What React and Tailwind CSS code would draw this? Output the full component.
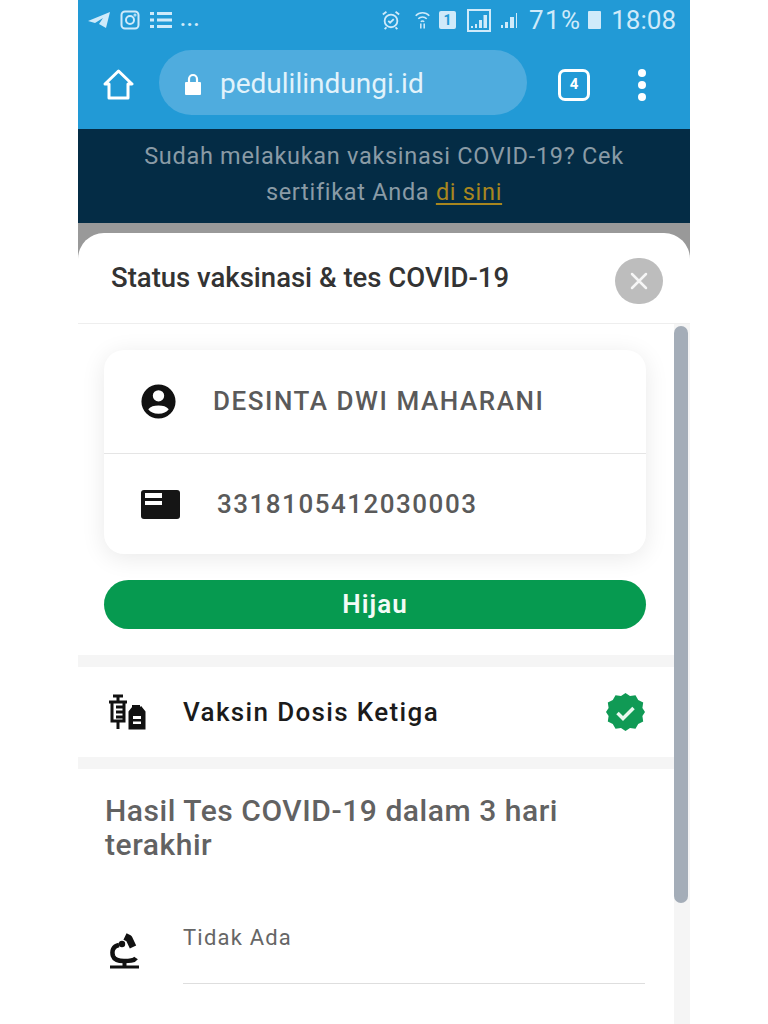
export default function App() {
  return (
    <div className="h-[1024px] w-[768px] overflow-hidden bg-white font-['Roboto',sans-serif]">
      <div className="ml-[78px] flex h-full w-[612px] flex-col">
        <header className="h-[129px] shrink-0 bg-[#229ad6] text-[#cfeafa]">
          <div className="flex h-[40px] items-center pl-[10px] pr-[14px]">
            <svg width="22" height="18" viewBox="0 0 22 18" fill="currentColor"><path d="M0 10 L22 1 L18 17 L11 13 L15 7 L7 12 Z" /></svg>
            <svg className="ml-[10px]" width="20" height="20" viewBox="0 0 20 20" fill="none" stroke="currentColor" strokeWidth="2"><rect x="1.500" y="1.500" width="17" height="17" rx="3.500" /><circle cx="10" cy="10" r="4" /><circle cx="15" cy="5" r="0.5" /></svg>
            <svg className="ml-[10px]" width="22" height="18" viewBox="0 0 22 18" fill="currentColor"><rect x="0" y="1" width="4" height="3" /><rect x="7" y="1" width="15" height="3" /><rect x="0" y="7.500" width="4" height="3" /><rect x="7" y="7.500" width="15" height="3" /><rect x="0" y="14" width="4" height="3" /><rect x="7" y="14" width="15" height="3" /></svg>
            <span className="ml-[8px] mt-[-3px] text-[20px] font-bold leading-none tracking-[1px]">...</span>
            <svg className="ml-auto" width="20" height="22" viewBox="0 0 22 24" fill="none" stroke="currentColor" strokeWidth="2"><circle cx="11" cy="13" r="7" /><path d="M8 13l2 2 4-4M2 6l4-3M20 6l-4-3M6 20l-2 2M16 20l2 2" /></svg>
            <svg className="ml-[13px]" width="17" height="22" viewBox="0 0 20 24" fill="none" stroke="currentColor" strokeWidth="1.800"><path d="M2 7a11 11 0 0 1 16 0M5 10.500a7 7 0 0 1 10 0M8 14a3 3 0 0 1 4 0" /><path d="M8 16v6M12 16v6" /></svg>
            <div className="ml-[8px] flex h-[18px] w-[17px] items-center justify-center rounded-[2px] bg-[#cfeafa] text-[14px] font-bold leading-none text-[#229ad6]">1</div>
            <div className="ml-[11px] flex h-[23px] w-[24px] items-end justify-center border-2 border-[#cfeafa] pb-[1px]">
              <svg width="18" height="16" viewBox="0 0 18 16" fill="currentColor"><path d="M1 15h2v-2H1zM5 15h2v-4H5zM9 15h3V7H9zM13.500 15H17V2h-3.500z" /></svg>
            </div>
            <svg className="ml-[9px]" width="19" height="18" viewBox="0 0 19 18" fill="currentColor"><path d="M1 17h2v-3H1zM5 17h3v-6H5zM10 17h4V6h-4zM16 17h1V2h-1z" /></svg>
            <span className="ml-[10px] text-[26px] leading-none tracking-[1.3px]">71%</span>
            <div className="ml-[7px] h-[18px] w-[13px] rounded-[1px] bg-[#cfeafa]" />
            <span className="ml-[10px] text-[26px] leading-none">18:08</span>
          </div>
          <div className="flex h-[89px] items-center">
            <svg className="ml-[25px]" width="31" height="31" viewBox="0 0 31 31" fill="none" stroke="white" strokeWidth="3" strokeLinejoin="round"><path d="M2 15 L15.500 2 L29 15 H25 V29 H6 V15 Z" /></svg>
            <div className="ml-[25px] mt-[-4px] flex h-[65px] w-[368px] items-center rounded-full bg-[#4facde] pl-[24px] pt-[3px] text-white">
              <svg width="20" height="24" viewBox="0 0 20 24" fill="white"><path d="M3 10h14a1 1 0 0 1 1 1v11a1 1 0 0 1-1 1H3a1 1 0 0 1-1-1V11a1 1 0 0 1 1-1Z" /><path d="M6 11V7a4 4 0 0 1 8 0v4" fill="none" stroke="white" strokeWidth="2.200" /></svg>
              <span className="ml-[17px] text-[28px] leading-none text-[#e2f3fb]">pedulilindungi.id</span>
            </div>
            <div className="ml-[31px] flex h-[32px] w-[32px] items-center justify-center rounded-[7px] border-[3px] border-white text-[15px] font-bold leading-none text-white">4</div>
            <div className="ml-[48px] flex flex-col gap-[4px]">
              <div className="h-[8px] w-[8px] rounded-full bg-white" />
              <div className="h-[8px] w-[8px] rounded-full bg-white" />
              <div className="h-[8px] w-[8px] rounded-full bg-white" />
            </div>
          </div>
        </header>

        <div className="flex h-[94px] shrink-0 flex-col items-center justify-center bg-[#042c45] pb-[4px] text-[23.500px] leading-[36px] tracking-[0.7px] text-[#8a9ba6]">
          <p>Sudah melakukan vaksinasi COVID-19? Cek</p>
          <p>sertifikat Anda <span className="text-[#a8861f] underline underline-offset-[3px]">di sini</span></p>
        </div>

        <div className="min-h-0 flex-1 bg-[#999999] pt-[10px]">
          <div className="flex h-full flex-col rounded-t-[26px] bg-white">
            <div className="flex h-[91px] shrink-0 items-center justify-between border-b border-[#eeeeee] pl-[33px] pr-[27px]">
              <h1 className="mt-[-1px] text-[27.500px] font-medium leading-none text-[#333333]">Status vaksinasi &amp; tes COVID-19</h1>
              <button className="mt-[6px] flex h-[46px] w-[48px] items-center justify-center rounded-full bg-[#bdbdbd]">
                <svg width="18" height="18" viewBox="0 0 18 18" stroke="#f6f6f6" strokeWidth="2.500" strokeLinecap="round"><path d="M2 2 16 16M16 2 2 16" /></svg>
              </button>
            </div>
            <div className="flex min-h-0 flex-1">
              <main className="min-w-0 flex-1">
                <div className="pl-[26px] pr-[28px] pt-[26px]">
                  <section className="rounded-[20px] bg-white shadow-[0_4px_24px_rgba(0,0,0,0.09)]">
                    <div className="flex h-[104px] items-center border-b border-[#e5e5e5] pl-[37px]">
                      <svg className="-ml-[2px]" width="39" height="39" viewBox="0 0 24 24" fill="#111"><path d="M12 1.500a10.500 10.500 0 1 0 0 21 10.500 10.500 0 0 0 0-21Zm0 3.500a3.500 3.500 0 1 1 0 7 3.500 3.500 0 0 1 0-7Zm0 14.500c-3 0-5-1-6.300-2.800 1.500-1.600 3.400-2.200 6.300-2.200s4.800.6 6.300 2.200c-1.300 1.800-3.300 2.800-6.300 2.800Z" /></svg>
                      <span className="ml-[35px] mt-[-1px] text-[26px] font-medium leading-none tracking-[1.55px] text-[#5a5a5a]">DESINTA DWI MAHARANI</span>
                    </div>
                    <div className="flex h-[100px] items-center pl-[37px]">
                      <svg width="39" height="29" viewBox="0 0 39 29"><rect width="39" height="29" rx="3" fill="#151515" /><rect x="4" y="3" width="17" height="5" fill="#fff" /><rect x="4" y="11" width="17" height="4" fill="#fff" /></svg>
                      <span className="ml-[37px] text-[26px] font-medium leading-none tracking-[1.5px] text-[#5a5a5a]">3318105412030003</span>
                    </div>
                  </section>
                  <div className="mt-[26px] flex h-[49px] items-center justify-center rounded-full bg-[#069a50] pb-[1px] text-[26px] font-semibold leading-none tracking-[1px] text-[#f3fbf6]">Hijau</div>
                </div>
                <div className="mt-[26px] h-[12px] bg-[#f5f5f5]" />
                <div className="flex h-[90px] items-center pl-[30px] pr-[28px]">
                  <svg width="38" height="36" viewBox="0 0 38 36" fill="none" stroke="#111" strokeWidth="3"><path d="M5 2h10M10 2v6M1 8h18M4 8v19h12V8M10 27v8M8 13h8M8 18h8M8 23h8" /><path d="M24 12.500h8" /><path d="M26 13l-4 5v16h14V18l-4-5" fill="#111" /><path d="M25 22h8v8h-8z" fill="#fff" stroke="none" /><path d="M25 25h8v2.500h-8z" fill="#111" stroke="none" /></svg>
                  <span className="ml-[37px] text-[26px] font-medium leading-none tracking-[1.35px] text-[#1b1b1b]">Vaksin Dosis Ketiga</span>
                  <svg className="ml-auto" width="41" height="40" viewBox="0 0 40 40"><path fill="#109a55" d="M20 1l4.500 3 5.500-.8 2.700 4.800 5 2.500-.8 5.500 2.600 4-2.600 4 .8 5.500-5 2.500L30 36.800 24.500 36 20 39l-4.500-3-5.500.8L7.300 32l-5-2.500.8-5.500L.5 20l2.600-4-.8-5.500 5-2.500L10 3.200l5.500.8Z" /><path d="M12 21l5.500 5.500L28 16" fill="none" stroke="#e8f8ef" strokeWidth="3.500" /></svg>
                </div>
                <div className="h-[12px] bg-[#f5f5f5]" />
                <h2 className="mt-[25px] pl-[27px] pr-[80px] text-[30px] font-medium leading-[34px] tracking-[0.55px] text-[#626262]">Hasil Tes COVID-19 dalam 3 hari terakhir</h2>
                <div className="mt-[59px] flex pl-[32px] pr-[29px]">
                  <svg className="mt-[12px]" width="29" height="36" viewBox="0 0 29 36" fill="none" stroke="#111"><path d="M9 12C3 13 1.500 18 3 23C4.500 27.500 9 28 14 28C19 28 24 28 26 25" strokeWidth="4.500" /><path d="M14.500 28v5" strokeWidth="4" /><path d="M0 34h29" strokeWidth="3" /><circle cx="12" cy="11" r="3.200" fill="#111" stroke="none" /><path d="M15 3.500L19 5.500L23 14" strokeWidth="7" strokeLinejoin="round" /></svg>
                  <div className="ml-[44px] flex-1 border-b border-[#dedede] pb-[29px]">
                    <span className="block pt-[1px] text-[22px] leading-[32px] tracking-[1.2px] text-[#666666]">Tidak Ada</span>
                  </div>
                </div>
              </main>
              <aside className="w-[16px] shrink-0 bg-[#f5f5f5] pr-[2px] pt-[2px]">
                <div className="h-[577px] rounded-full bg-[#a4adb8]" />
              </aside>
            </div>
          </div>
        </div>
      </div>
    </div>
  );
}
